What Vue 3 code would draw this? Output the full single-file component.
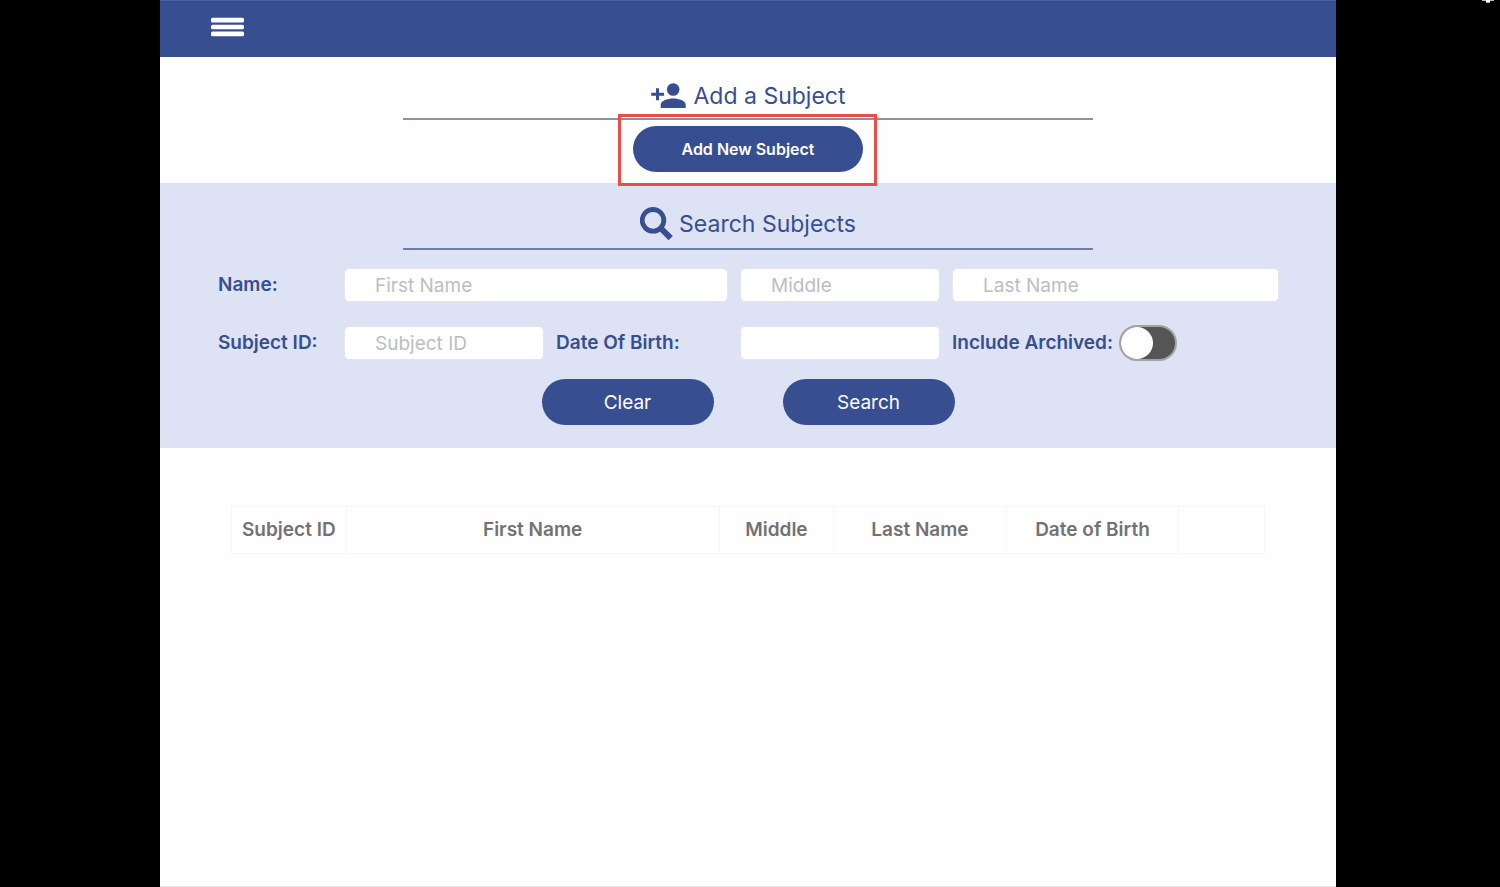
<script setup>
import { ref } from 'vue'

const firstName = ref('')
const middle = ref('')
const lastName = ref('')
const subjectId = ref('')
const birthDate = ref('')
const archived = ref(false)
const columns = ['Subject ID', 'First Name', 'Middle', 'Last Name', 'Date of Birth', '']

function clearForm() {
  firstName.value = ''
  middle.value = ''
  lastName.value = ''
  subjectId.value = ''
  birthDate.value = ''
  archived.value = false
}
</script>

<template>
  <div class="screen">
    <svg class="notch" viewBox="0 0 12 3" aria-hidden="true">
      <path d="M0 0h12v1H8v2H4V1H0z" fill="#bbb" />
      <path d="M4 0h4v2H4z" fill="#fff" />
    </svg>
    <div class="page">
      <header class="bar">
        <button class="menu" type="button" aria-label="Menu">
          <svg viewBox="0 0 34 20" aria-hidden="true">
            <g fill="#fff">
              <rect x="1" y="0.8" width="33" height="4.600" rx="1.5" />
              <rect x="1" y="7.7" width="33" height="4.600" rx="1.5" />
              <rect x="1" y="14.600" width="33" height="4.600" rx="1.5" />
            </g>
          </svg>
        </button>
      </header>

      <section class="add">
        <h1 class="heading">
          <svg class="person" viewBox="0 0 36 26" aria-hidden="true">
            <g fill="#374e91">
              <circle cx="22.2" cy="6.500" r="6.300" />
              <path d="M9.700 25v-3.300c0-4 7-6.200 12.500-6.200s12.500 2.200 12.500 6.200V25z" />
              <path d="M5 5.200h3v4.500h5v3H8v4.500H5v-4.500H.2v-3H5z" />
            </g>
          </svg>
          Add a Subject
        </h1>
        <div class="highlight-wrap">
          <button class="pill primary" type="button">Add New Subject</button>
          <span class="highlight"></span>
        </div>
      </section>

      <section class="search">
        <h2 class="heading">
          <svg class="glass" viewBox="0 0 34 34" aria-hidden="true">
            <circle cx="13" cy="13.300" r="10.800" fill="none" stroke="#374e91" stroke-width="4.800" />
            <path d="M20.500 21l10.200 10.200" stroke="#374e91" stroke-width="6" />
          </svg>
          Search Subjects
        </h2>
        <form @submit.prevent>
          <div class="fields">
            <label for="first">Name:</label>
            <input id="first" v-model="firstName" class="wide" type="text" placeholder="First Name" />
            <input v-model="middle" type="text" placeholder="Middle" aria-label="Middle" />
            <input v-model="lastName" type="text" placeholder="Last Name" aria-label="Last Name" />
            <label for="sid">Subject ID:</label>
            <input id="sid" v-model="subjectId" type="text" placeholder="Subject ID" />
            <label for="dob">Date Of Birth:</label>
            <input id="dob" v-model="birthDate" type="text" />
            <div class="archive">
              <label for="archived">Include Archived:</label>
              <input id="archived" v-model="archived" class="toggle" type="checkbox" role="switch" />
            </div>
          </div>
          <div class="actions">
            <button class="pill" type="button" @click="clearForm">Clear</button>
            <button class="pill" type="submit">Search</button>
          </div>
        </form>
      </section>

      <section class="results">
        <table>
          <colgroup>
            <col v-for="(c, i) in columns" :key="i" :class="'col' + i" />
          </colgroup>
          <thead>
            <tr>
              <th v-for="(c, i) in columns" :key="i" scope="col">{{ c }}</th>
            </tr>
          </thead>
        </table>
      </section>
    </div>
  </div>
</template>

<style>
body {
  margin: 0;
  background: #000;
}
</style>

<style scoped>
.screen {
  position: relative;
  box-sizing: border-box;
  min-height: 100vh;
  padding: 0 164px 0 160px;
  display: flex;
  background: #000;
  font-family: Inter, "Liberation Sans", sans-serif;
  color: #374e91;
}
.notch {
  position: absolute;
  top: 0;
  right: 6px;
  width: 12px;
  height: 3px;
}
.page {
  flex: 1;
  border-bottom: 1px solid #e6e6e6;
  background: #fefefe;
}
.bar {
  box-sizing: border-box;
  height: 57px;
  padding: 16px 50px;
  background: #374e91;
  border-top: 1px solid #4a60a0;
}
button {
  font-family: inherit;
  border: 0;
  cursor: pointer;
}
.menu {
  display: block;
  padding: 0;
  background: none;
}
.menu svg {
  display: block;
  width: 34px;
  height: 20px;
}
.add {
  display: flex;
  flex-direction: column;
  align-items: center;
  padding: 16px 0 11px;
}
.heading {
  box-sizing: border-box;
  display: flex;
  align-items: center;
  justify-content: center;
  width: 58.6%;
  height: 47px;
  margin: 0 auto;
  border-bottom: 2px solid #8791aa;
  font-size: 23px;
  line-height: 32px;
  font-weight: 400;
}
.person {
  width: 36px;
  height: 26px;
  margin-right: 7px;
}
.glass {
  width: 34px;
  height: 34px;
  margin-right: 5px;
}
.highlight-wrap {
  position: relative;
  margin-top: 6px;
}
.highlight {
  position: absolute;
  inset: -12px -14px -14px -15px;
  border: 3px solid #e94e47;
  pointer-events: none;
}
.pill {
  display: block;
  width: 172px;
  height: 46px;
  border-radius: 23px;
  background: #374e91;
  color: #fff;
  font-size: 19px;
}
.primary {
  width: 230px;
  font-size: 16px;
  font-weight: 600;
}
.search {
  padding: 16px 0 23px;
  background: #dde3f4;
}
.search .heading {
  height: 51px;
  border-color: #6d7fa8;
}
.fields {
  display: grid;
  grid-template-columns: 114fr 200fr 172fr 200fr 327fr;
  column-gap: 12px;
  row-gap: 24px;
  align-items: center;
  margin: 18px 57px 0 58px;
}
label {
  font-size: 19px;
  line-height: 24px;
  font-weight: 600;
  white-space: nowrap;
}
input[type="text"] {
  box-sizing: border-box;
  width: 100%;
  min-width: 0;
  height: 34px;
  padding: 0 30px;
  border: 1px solid #e4e5ec;
  border-radius: 5px;
  background: #fff;
  font-family: inherit;
  font-size: 19px;
  color: #444;
}
input::placeholder {
  color: #bdbdc0;
  opacity: 1;
}
.wide {
  grid-column: span 2;
}
.archive {
  display: flex;
  align-items: center;
  gap: 6px;
  height: 34px;
}
.toggle {
  appearance: none;
  box-sizing: border-box;
  flex: none;
  display: flex;
  width: 58px;
  height: 36px;
  margin: 0;
  border: 2px solid #a3a3a5;
  border-radius: 18px;
  background: #555;
}
.toggle::before {
  content: "";
  width: 32px;
  height: 32px;
  border-radius: 50%;
  background: #fff;
}
.toggle:checked {
  justify-content: flex-end;
}
.actions {
  display: flex;
  justify-content: center;
  gap: 69px;
  margin-top: 19px;
}
.results {
  padding: 58px 71px 0;
}
table {
  width: 100%;
  table-layout: fixed;
  border-collapse: collapse;
}
.col0,
.col2 {
  width: 11.1%;
}
.col1 {
  width: 36.1%;
}
.col3,
.col4 {
  width: 16.7%;
}
.col5 {
  width: 8.3%;
}
th {
  height: 46px;
  padding: 0;
  border: 1px solid #f6f6f6;
  color: #727274;
  font-size: 19px;
  line-height: 24px;
  font-weight: 600;
}
</style>
